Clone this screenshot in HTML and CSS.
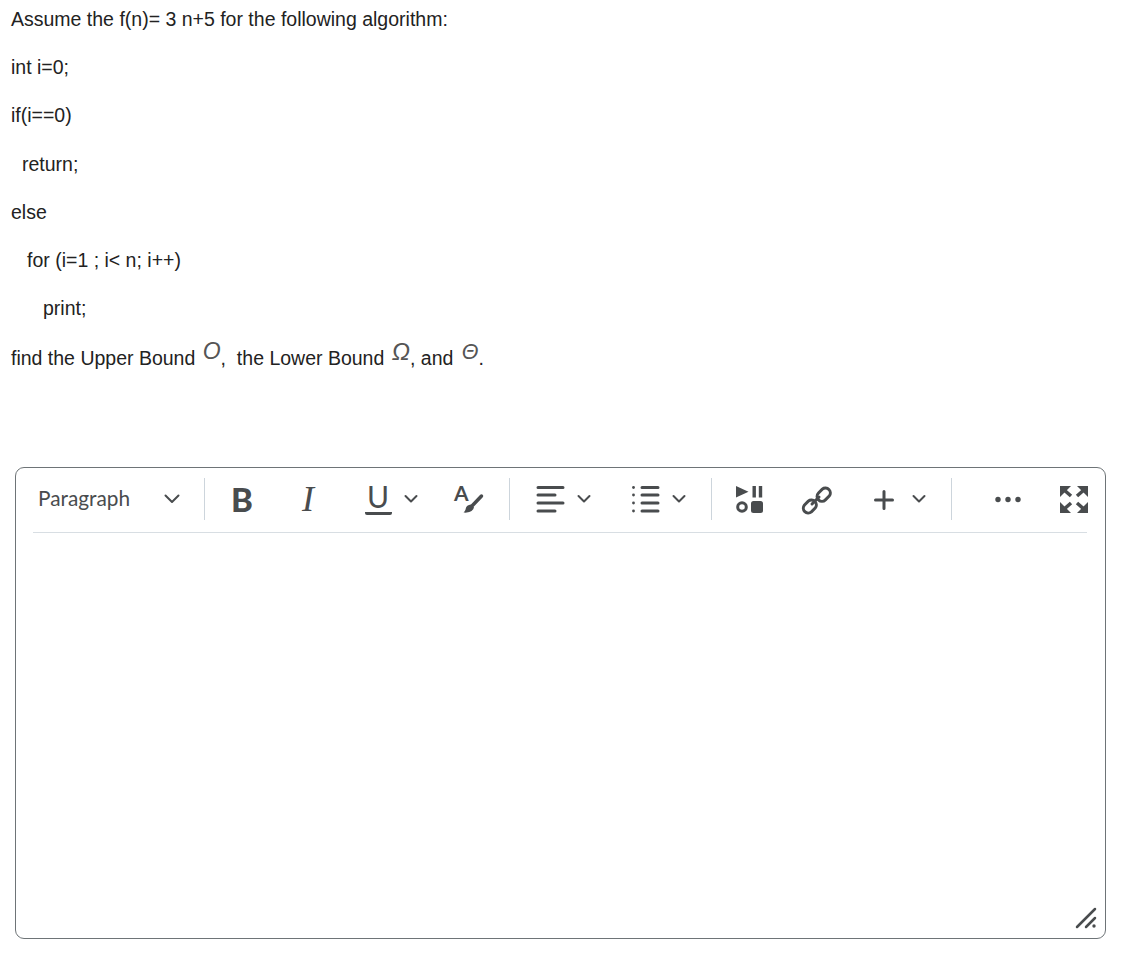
FILE: index.html
```html
<!DOCTYPE html>
<html lang="en">
<head>
<meta charset="utf-8">
<title>Question</title>
<link rel="stylesheet" href="styles.css">
</head>
<body>
<main class="page">
  <section class="question">
    <p>Assume the f(n)= 3 n+5 for the following algorithm:</p>
    <p>int i=0;</p>
    <p>if(i==0)</p>
    <p class="indent-a">return;</p>
    <p>else</p>
    <p class="indent-b">for (i=1 ; i&lt; n; i++)</p>
    <p class="indent-c">print;</p>
    <p class="last">find the Upper Bound <span class="math math-o">O</span>,&nbsp; the Lower Bound <span class="math math-w">Ω</span>, and <span class="math math-t">Θ</span>.</p>
  </section>

  <section class="editor">
    <div class="toolbar">
      <div class="group g-format">
        <span class="format-label">Paragraph</span>
        <svg class="chev chev-format" viewBox="0 0 22 42"><path d="M4.500 17.500 11 24l6.500-6.500"/></svg>
      </div>
      <div class="group g-text">
        <span class="btn glyph-b">B</span>
        <span class="btn glyph-i">I</span>
        <span class="btn glyph-u"><span class="u-line">U</span></span>
        <svg class="chev" viewBox="0 0 22 42"><path d="M5.500 18 11 23.500 16.500 18"/></svg>
        <span class="btn glyph-a"><span class="a-letter">A</span>
          <svg class="brush" viewBox="0 0 44 42"><path class="brush-stem" d="M34.500 18 24.500 28.500"/><path class="fill" d="M24 26.500c-3 .4-4.800 1.600-5.300 4.200-.3 1.700-1 2.700-2.200 3.800 4.300.6 9.200-.7 10.500-5z"/></svg>
        </span>
      </div>
      <div class="group g-para">
        <svg class="btn icon" viewBox="0 0 44 42"><path class="bar" d="M9 9.500h25M9 17h17M9 25h25M9 33h17"/></svg>
        <svg class="chev" viewBox="0 0 22 42"><path d="M5.500 18 11 23.500 16.500 18"/></svg>
        <svg class="btn icon list-btn" viewBox="0 0 44 42"><path class="bar" d="M18 9.500h16M18 17h16M18 25h16M18 33h16"/><g class="fill"><circle cx="9.500" cy="9.500" r="1.400"/><circle cx="9.500" cy="17" r="1.400"/><circle cx="9.500" cy="25" r="1.400"/><circle cx="9.500" cy="33" r="1.400"/></g></svg>
        <svg class="chev" viewBox="0 0 22 42"><path d="M5.500 18 11 23.500 16.500 18"/></svg>
      </div>
      <div class="group g-insert">
        <svg class="btn icon" viewBox="0 0 44 42"><path class="fill" d="M8 8l12.500 5.700L8 19.500z"/><path class="fill" d="M24.500 8h3.400v11.500h-3.400zM30.800 8h3.400v11.500h-3.400z"/><circle class="ring" cx="14" cy="29" r="4.300"/><rect class="fill" x="23" y="23" width="12" height="12" rx="2.500"/></svg>
        <svg class="btn icon link-btn" viewBox="0 0 44 42"><g class="link"><path d="M24.500 15l3.800-3.800a4.900 4.900 0 0 1 6.900 6.900l-3.800 3.800a4.900 4.900 0 0 1-6.900 0 4.900 4.900 0 0 1 0-6.900z"/><path d="M10.500 27l3.800-3.800a4.900 4.900 0 0 1 6.900 6.900l-3.800 3.800a4.900 4.900 0 0 1-6.900-6.900z"/><path d="M18 26l7-7"/></g></svg>
        <svg class="btn icon plus-btn" viewBox="0 0 44 42"><path class="bar" d="M22 13.500v17M13.500 22h17"/></svg>
        <svg class="chev chev-plus" viewBox="0 0 22 42"><path d="M5.500 18 11 23.500 16.500 18"/></svg>
      </div>
      <div class="group g-more">
        <svg class="btn icon" viewBox="0 0 44 42"><g class="fill"><circle cx="12" cy="21.500" r="2.700"/><circle cx="22" cy="21.500" r="2.700"/><circle cx="32" cy="21.500" r="2.700"/></g></svg>
        <svg class="btn icon expand-btn" viewBox="0 0 44 42"><g class="fill"><path d="M8 8h11L8 19z"/><path d="M36 8H25l11 11z"/><path d="M8 35h11L8 24z"/><path d="M36 35H25l11-11z"/></g><path class="arrow" d="M11 11l8 7M33 11l-8 7M11 32l8-7M33 32l-8-7"/></svg>
      </div>
    </div>
    <div class="divider"></div>
    <svg class="grip" viewBox="0 0 24 24"><path d="M3 21 21 3M12 21l9-9"/><circle cx="20" cy="20" r="1.700"/></svg>
  </section>
</main>
</body>
</html>
```

FILE: styles.css
```css
* { box-sizing: border-box; }
html, body { margin: 0; padding: 0; background: #fff; }
.page { width: 1128px; height: 967px; overflow: hidden; }

.question {
  padding: 7px 0 0 11px;
  font-family: "Liberation Sans", Arial, sans-serif;
  font-size: 19.5px;
  color: #222;
}
.question p { margin: 0 0 24px; line-height: 24.2px; height: 24.2px; white-space: nowrap; }
.question .last { margin-bottom: 0; padding-top: 1px; }
.indent-a { padding-left: 11px; }
.indent-b { padding-left: 16px; }
.indent-c { padding-left: 32px; }

.math {
  font-family: "Liberation Sans", sans-serif;
  font-style: italic;
  color: #555;
  position: relative;
  padding-left: 2px;
}
.math-o { font-size: 23px; top: -6px; }
.math-w { font-size: 24px; top: -5px; }
.math-t { font-size: 21.500px; top: -6px; padding-left: 3px; }

.editor {
  position: relative;
  margin: 98px 0 0 15px;
  width: 1091px;
  height: 472px;
  border: 1px solid #6e7477;
  border-radius: 9px;
  font-family: Lato, sans-serif;
  color: #494c4e;
}
.toolbar { display: flex; height: 42px; margin-top: 10px; }
.group { display: flex; align-items: center; height: 42px; flex: none; border-right: 1px solid #cdd5dc; }
.g-format { width: 189px; padding-left: 22px; }
.g-text { width: 305px; padding-left: 15px; }
.g-para { width: 202px; padding-left: 19px; }
.g-insert { width: 240px; padding-left: 16px; }
.g-more { width: 153px; padding-left: 34px; border-right: 0; }

.format-label { font-size: 20.800px; width: 123px; color: #494c4e; flex: none; padding-bottom: 2px; }
.btn { width: 44px; height: 42px; flex: none; display: flex; align-items: center; justify-content: center; position: relative; }
.chev { width: 22px; height: 42px; flex: none; fill: none; stroke: #494c4e; stroke-width: 2; stroke-linecap: round; stroke-linejoin: round; }
.chev-plus { margin-left: 2px; }

.glyph-b { font-family: Lato, sans-serif; font-weight: 900; font-size: 33px; line-height: 42px; }
.glyph-i { font-family: "Liberation Serif", serif; font-style: italic; font-size: 36px; line-height: 42px; margin-left: 22px; }
.glyph-u { font-size: 30px; line-height: 42px; margin-left: 26px; }
.u-line { display: block; width: 27px; text-align: center; line-height: 30px; height: 34px; border-bottom: 3px solid #494c4e; border-radius: 2px; margin-top: -1px; }
.glyph-a { margin-left: 25px; }
.a-letter { position: absolute; left: 7px; top: 4px; font-size: 21px; font-weight: 700; line-height: 22px; }
.brush { position: absolute; inset: 0; width: 44px; height: 42px; }
.brush-stem { fill: none; stroke: #494c4e; stroke-width: 3.500; stroke-linecap: round; }

.icon { overflow: visible; }
.list-btn { margin-left: 29px; }
.link-btn { margin-left: 22px; }
.plus-btn { margin-left: 24px; }
.expand-btn { margin-left: 22px; }

.bar { fill: none; stroke: #494c4e; stroke-width: 3; stroke-linecap: round; }
.fill { fill: #494c4e; stroke: none; }
.ring { fill: none; stroke: #494c4e; stroke-width: 3; }
.link { fill: none; stroke: #494c4e; stroke-width: 3; stroke-linecap: round; }
.arrow { fill: none; stroke: #494c4e; stroke-width: 3.500; }

.divider { height: 1px; margin: 12px 18px 0 17px; background: #d8dee3; }

.grip { position: absolute; right: 7px; bottom: 8px; width: 24px; height: 24px; fill: #494c4e; stroke: #494c4e; stroke-width: 2.500; stroke-linecap: round; }
.grip circle { stroke: none; }
```
